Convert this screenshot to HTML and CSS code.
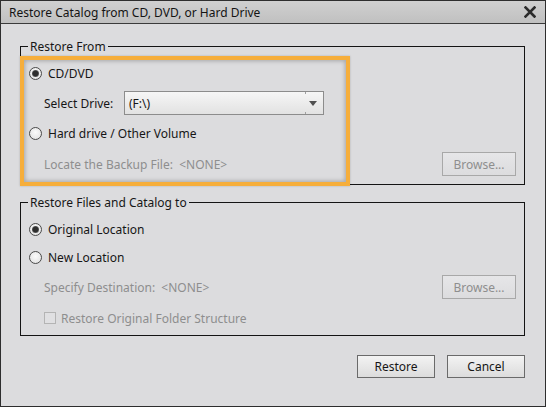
FILE: index.html
```html
<!DOCTYPE html>
<html lang="en">
<head>
  <meta charset="UTF-8" />
  <title>Restore Catalog</title>
  <link rel="stylesheet" href="styles.css">
</head>
<body>
  <div class="dialog">
    <div class="titlebar">
      <span class="title">Restore Catalog from CD, DVD, or Hard Drive</span>
      <svg class="close" width="12" height="12" viewBox="0 0 12 12">
        <path d="M1.5 1.5 L10.5 10.5 M10.5 1.5 L1.5 10.5" stroke="#2c2c2c" stroke-width="2.6" stroke-linecap="square"/>
      </svg>
    </div>

    <div class="content">
      <fieldset class="group group-from">
        <legend>Restore From</legend>
        <div class="group-body">
          <div class="highlight"></div>
          <div class="row row-radio">
            <span class="radio checked"></span>
            <span>CD/DVD</span>
          </div>
          <div class="row row-select">
            <span class="label">Select Drive:</span>
            <div class="select">
              <span class="select-value">(F:\)</span>
              <span class="select-sep"></span>
              <span class="select-arrow"></span>
            </div>
          </div>
          <div class="row row-radio">
            <span class="radio"></span>
            <span>Hard drive / Other Volume</span>
          </div>
          <div class="row row-field">
            <span class="label disabled">Locate the Backup File:&nbsp;&nbsp;&lt;NONE&gt;</span>
            <button class="btn btn-browse" disabled>Browse...</button>
          </div>
        </div>
      </fieldset>

      <fieldset class="group group-to">
        <legend>Restore Files and Catalog to</legend>
        <div class="group-body">
          <div class="row row-radio">
            <span class="radio checked"></span>
            <span>Original Location</span>
          </div>
          <div class="row row-radio row-new">
            <span class="radio"></span>
            <span>New Location</span>
          </div>
          <div class="row row-field">
            <span class="label disabled">Specify Destination:&nbsp;&nbsp;&lt;NONE&gt;</span>
            <button class="btn btn-browse" disabled>Browse...</button>
          </div>
          <div class="row row-check">
            <span class="checkbox"></span>
            <span class="disabled">Restore Original Folder Structure</span>
          </div>
        </div>
      </fieldset>

      <div class="actions">
        <button class="btn">Restore</button>
        <button class="btn">Cancel</button>
      </div>
    </div>
  </div>
</body>
</html>
```
FILE: styles.css
```css
body {
  margin: 0;
  padding: 0;
  font-family: "Noto Sans", "Open Sans", sans-serif;
  font-size: 12px;
  color: #161616;
}

.dialog {
  width: 546px;
  height: 407px;
  box-sizing: border-box;
  border: 1px solid #2e2e2e;
  background-color: #dcdcde;
}

.titlebar {
  height: 22px;
  display: flex;
  align-items: center;
  justify-content: space-between;
  padding: 0 9px 0 8px;
  background: linear-gradient(#d0d0d0, #c0c0c0);
  border-bottom: 1px solid #3a3a3a;
}

.title {
  font-size: 12px;
  color: #141414;
}

.content {
  padding: 15px 20px 0 19px;
}

.group {
  margin: 0;
  padding: 0;
  border: 1px solid #141414;
  min-width: 0;
}

.group legend {
  margin-left: 7px;
  padding: 0 2px;
  line-height: 15px;
}

.group-to {
  margin-top: 10px;
}

.group-body {
  position: relative;
  padding: 8px 8px 8px 0;
}

.group-to .group-body {
  padding-bottom: 6px;
}

.row {
  display: flex;
  align-items: center;
}

.row-radio {
  height: 22px;
  padding-left: 8px;
}

.row-select {
  height: 24px;
  margin-top: 7px;
  margin-bottom: 7px;
  padding-left: 23px;
}

.row-new {
  margin-top: 6px;
}

.row-field {
  height: 24px;
  margin-top: 8px;
  padding-left: 23px;
  justify-content: space-between;
}

.group-to .row-field {
  margin-top: 7px;
}

.row-check {
  height: 22px;
  margin-top: 8px;
  padding-left: 23px;
}

.label {
  width: 80px;
}

.row-field .label {
  width: auto;
}

.disabled {
  color: #8e8e8e;
}

.radio {
  position: relative;
  width: 13px;
  height: 13px;
  box-sizing: border-box;
  border: 1px solid #4a4a4a;
  border-radius: 50%;
  margin-right: 6px;
  background: radial-gradient(circle at 50% 40%, #fbfbfb, #dedede);
}

.radio.checked::after {
  content: "";
  position: absolute;
  top: 2px;
  left: 2px;
  width: 7px;
  height: 7px;
  border-radius: 50%;
  background: radial-gradient(circle, #2e2e2e 45%, #6e6e6e 80%);
}

.checkbox {
  width: 12px;
  height: 12px;
  box-sizing: border-box;
  border: 1px solid #b4b4b4;
  background-color: #e0e0e2;
  margin-right: 5px;
}

.select {
  position: relative;
  width: 200px;
  height: 24px;
  box-sizing: border-box;
  border: 1px solid #8c8c8c;
  background: linear-gradient(#f6f6f6, #e2e2e2);
  display: flex;
  align-items: center;
  padding-left: 4px;
}

.select-value {
  flex: 1;
}

.select-sep {
  width: 1px;
  height: 100%;
  background: linear-gradient(to bottom, #a0a0a0 2px, transparent 2px, transparent 20px, #a0a0a0 20px);
  margin-right: 3px;
}

.select-arrow {
  width: 0;
  height: 0;
  border-left: 4.5px solid transparent;
  border-right: 4.5px solid transparent;
  border-top: 5px solid #505050;
  margin-right: 6px;
}

.btn {
  font-family: "Noto Sans", "Open Sans", sans-serif;
  font-size: 12px;
  color: #161616;
  width: 78px;
  height: 23px;
  padding: 0;
  box-sizing: border-box;
  border: 1px solid #6a6a6a;
  border-radius: 0;
  background: linear-gradient(#f3f3f3, #dcdcdc);
}

.btn-browse {
  width: 74px;
  height: 24px;
  border-color: #a8a8a8;
  background: linear-gradient(#e6e6e8, #dcdcde);
  color: #8e8e8e;
}

.actions {
  display: flex;
  justify-content: flex-end;
  gap: 12px;
  margin-top: 19px;
}

.highlight {
  position: absolute;
  top: 2px;
  left: -1px;
  width: 330px;
  height: 130px;
  box-sizing: border-box;
  border: 4px solid #f6ae3b;
  box-shadow: inset 0 0 4px 1px rgba(0, 0, 0, 0.25), 0 0 2px rgba(0, 0, 0, 0.2);
  pointer-events: none;
}
```
